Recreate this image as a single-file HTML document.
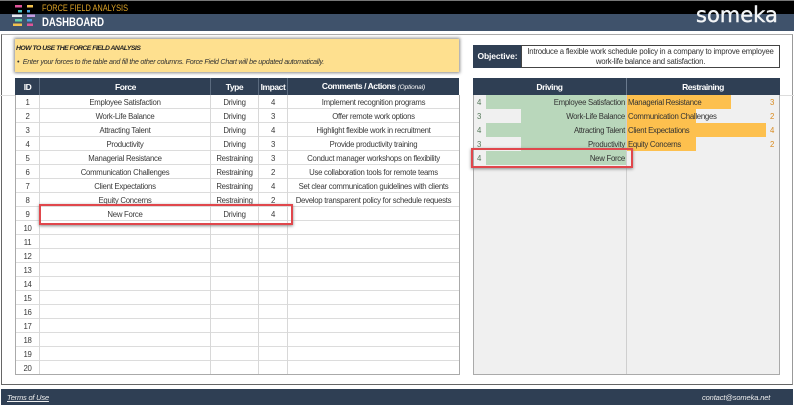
<!DOCTYPE html>
<html><head><meta charset="utf-8">
<style>
html,body{margin:0;padding:0;background:#fff}
#p{position:relative;width:794px;height:407px;overflow:hidden;background:#fff;font-family:"Liberation Sans",sans-serif;color:#333;filter:blur(.3px)}
#p div{position:absolute;box-sizing:border-box}
.t{font-size:7.8px;text-align:center;line-height:15px;height:14px;white-space:nowrap;color:#3a3a3a;letter-spacing:-.28px}
.h{font-size:8.5px;font-weight:bold;color:#fff;text-align:center;line-height:18px;height:17px;top:78px;letter-spacing:-.45px;white-space:nowrap}
.bar{height:14px}
.lbl{font-size:7.8px;line-height:15px;height:14px;white-space:nowrap;color:#333;letter-spacing:-.28px}
</style></head><body><div id="p">
<div style="left:0;top:0;width:794px;height:1px;background:#777"></div>
<div style="left:0;top:1px;width:794px;height:13px;background:#000"></div>
<div style="left:0;top:14px;width:794px;height:17px;background:#3f526b"></div>
<div style="left:42px;top:1px;font-size:9px;line-height:15px;color:#e0a526;white-space:nowrap;transform:scaleX(.82);transform-origin:left top">FORCE FIELD ANALYSIS</div>
<div style="left:42px;top:15px;font-size:11.5px;font-weight:bold;line-height:17px;color:#fff;white-space:nowrap;transform:scaleX(.83);transform-origin:left top">DASHBOARD</div>
<svg style="position:absolute;left:0;top:0" width="40" height="32">
<rect x="15" y="5" width="7" height="2.5" fill="#e0559a"/><rect x="27" y="5" width="6" height="2.5" fill="#f2c14e"/>
<rect x="18" y="10" width="4" height="2.5" fill="#4cc3c9"/><rect x="27" y="10" width="3" height="2.5" fill="#4aa3df"/>
<rect x="12" y="14.5" width="10" height="2.5" fill="#e8e8f0"/><rect x="27" y="14.5" width="8" height="2.5" fill="#c79be0"/>
<rect x="15" y="19" width="7" height="2.5" fill="#5fd0a8"/><rect x="27" y="19" width="5" height="2.5" fill="#4aa3df"/>
<rect x="13" y="23.5" width="9" height="2.5" fill="#f2c14e"/><rect x="27" y="23.5" width="6" height="2.5" fill="#e0559a"/>
</svg>
<div style="left:696px;top:2px;width:90px;font-size:21px;line-height:26px;color:#f2f4f6;white-space:nowrap;font-family:'DejaVu Sans',sans-serif;-webkit-text-stroke:.4px #f2f4f6">someka</div>

<div style="left:1px;top:34px;width:792px;height:351px;border:1px solid #666;border-top-color:#aaa;border-right-color:#999;background:#fff"></div>
<div style="left:0;top:95px;width:15px;height:1px;background:#ddd"></div>

<div style="left:15px;top:39px;width:444px;height:33px;background:#fee08f;box-shadow:0 0 3px 1px #8a8a8a"></div>
<div style="left:16px;top:43px;font-size:6.8px;font-weight:bold;font-style:italic;line-height:11px;color:#222;white-space:nowrap;letter-spacing:-.5px">HOW TO USE THE FORCE FIELD ANALYSIS</div>
<div style="left:17px;top:56px;font-size:7.2px;font-style:italic;line-height:11px;color:#333;white-space:nowrap;letter-spacing:-.26px">•&nbsp; Enter your forces to the table and fill the other columns. Force Field Chart will be updated automatically.</div>

<div style="left:473px;top:45px;width:49px;height:23px;background:#2f3f54;color:#fff;font-size:8.5px;font-weight:bold;text-align:center;line-height:23px;letter-spacing:-.1px">Objective:</div>
<div style="left:521px;top:45px;width:259px;height:23px;background:#fff;border:1px solid #444;padding-top:1px;font-size:7.8px;line-height:10px;text-align:center;color:#333;white-space:nowrap;letter-spacing:-.22px">Introduce a flexible work schedule policy in a company to improve employee<br>work-life balance and satisfaction.</div>

<!-- table -->
<div style="left:15px;top:78px;width:444px;height:17px;background:#2f3f54"></div>
<div class="h" style="left:15px;width:25px">ID</div>
<div class="h" style="left:40px;width:171px">Force</div>
<div class="h" style="left:211px;width:47px">Type</div>
<div class="h" style="left:258px;width:30px">Impact</div>
<div class="h" style="left:288px;width:171px;line-height:17px">Comments / Actions <span style="font-weight:normal;font-style:italic;font-size:6.5px;letter-spacing:-.1px">(Optional)</span></div>
<div style="left:15px;top:95px;width:445px;height:280px;border:1px solid #aaa;border-top:0;border-bottom:1px solid #aaa;background:repeating-linear-gradient(to bottom,#fff 0,#fff 13px,#dcdcdc 13px,#dcdcdc 14px)"></div>
<div style="left:39px;top:78px;width:1px;height:296px;background:linear-gradient(#5a6a7e 17px,#d8d8d8 17px)"></div>
<div style="left:210px;top:78px;width:1px;height:296px;background:linear-gradient(#5a6a7e 17px,#d8d8d8 17px)"></div>
<div style="left:258px;top:78px;width:1px;height:296px;background:linear-gradient(#5a6a7e 17px,#d8d8d8 17px)"></div>
<div style="left:287px;top:78px;width:1px;height:296px;background:linear-gradient(#5a6a7e 17px,#d8d8d8 17px)"></div>

<div class="t" style="left:15px;top:95px;width:25px">1</div><div class="t" style="left:40px;top:95px;width:170px">Employee Satisfaction</div><div class="t" style="left:211px;top:95px;width:47px">Driving</div><div class="t" style="left:258px;top:95px;width:30px">4</div><div class="t" style="left:288px;top:95px;width:171px">Implement recognition programs</div>
<div class="t" style="left:15px;top:109px;width:25px">2</div><div class="t" style="left:40px;top:109px;width:170px">Work-Life Balance</div><div class="t" style="left:211px;top:109px;width:47px">Driving</div><div class="t" style="left:258px;top:109px;width:30px">3</div><div class="t" style="left:288px;top:109px;width:171px">Offer remote work options</div>
<div class="t" style="left:15px;top:123px;width:25px">3</div><div class="t" style="left:40px;top:123px;width:170px">Attracting Talent</div><div class="t" style="left:211px;top:123px;width:47px">Driving</div><div class="t" style="left:258px;top:123px;width:30px">4</div><div class="t" style="left:288px;top:123px;width:171px">Highlight flexible work in recruitment</div>
<div class="t" style="left:15px;top:137px;width:25px">4</div><div class="t" style="left:40px;top:137px;width:170px">Productivity</div><div class="t" style="left:211px;top:137px;width:47px">Driving</div><div class="t" style="left:258px;top:137px;width:30px">3</div><div class="t" style="left:288px;top:137px;width:171px">Provide productivity training</div>
<div class="t" style="left:15px;top:151px;width:25px">5</div><div class="t" style="left:40px;top:151px;width:170px">Managerial Resistance</div><div class="t" style="left:211px;top:151px;width:47px">Restraining</div><div class="t" style="left:258px;top:151px;width:30px">3</div><div class="t" style="left:288px;top:151px;width:171px">Conduct manager workshops on flexibility</div>
<div class="t" style="left:15px;top:165px;width:25px">6</div><div class="t" style="left:40px;top:165px;width:170px">Communication Challenges</div><div class="t" style="left:211px;top:165px;width:47px">Restraining</div><div class="t" style="left:258px;top:165px;width:30px">2</div><div class="t" style="left:288px;top:165px;width:171px">Use collaboration tools for remote teams</div>
<div class="t" style="left:15px;top:179px;width:25px">7</div><div class="t" style="left:40px;top:179px;width:170px">Client Expectations</div><div class="t" style="left:211px;top:179px;width:47px">Restraining</div><div class="t" style="left:258px;top:179px;width:30px">4</div><div class="t" style="left:288px;top:179px;width:171px">Set clear communication guidelines with clients</div>
<div class="t" style="left:15px;top:193px;width:25px">8</div><div class="t" style="left:40px;top:193px;width:170px">Equity Concerns</div><div class="t" style="left:211px;top:193px;width:47px">Restraining</div><div class="t" style="left:258px;top:193px;width:30px">2</div><div class="t" style="left:288px;top:193px;width:171px">Develop transparent policy for schedule requests</div>
<div class="t" style="left:15px;top:207px;width:25px">9</div><div class="t" style="left:40px;top:207px;width:170px">New Force</div><div class="t" style="left:211px;top:207px;width:47px">Driving</div><div class="t" style="left:258px;top:207px;width:30px">4</div>
<div class="t" style="left:15px;top:221px;width:25px">10</div>
<div class="t" style="left:15px;top:235px;width:25px">11</div>
<div class="t" style="left:15px;top:249px;width:25px">12</div>
<div class="t" style="left:15px;top:263px;width:25px">13</div>
<div class="t" style="left:15px;top:277px;width:25px">14</div>
<div class="t" style="left:15px;top:291px;width:25px">15</div>
<div class="t" style="left:15px;top:305px;width:25px">16</div>
<div class="t" style="left:15px;top:319px;width:25px">17</div>
<div class="t" style="left:15px;top:333px;width:25px">18</div>
<div class="t" style="left:15px;top:347px;width:25px">19</div>
<div class="t" style="left:15px;top:361px;width:25px">20</div>

<!-- chart -->
<div style="left:473px;top:78px;width:307px;height:17px;background:#2f3f54"></div>
<div class="h" style="left:473px;width:153px">Driving</div>
<div class="h" style="left:626px;width:154px">Restraining</div>
<div style="left:626px;top:78px;width:1px;height:17px;background:#6a7a8e"></div>
<div style="left:473px;top:95px;width:307px;height:280px;background:#f0f0f0;border:1px solid #aaa;border-top:0"></div>
<div style="left:626px;top:95px;width:1px;height:279px;background:#cfcfcf"></div>
<div style="left:780px;top:95px;width:14px;height:1px;background:#ddd"></div>

<div class="bar" style="left:486px;top:95px;width:140px;background:#b9d7bb"></div>
<div class="bar" style="left:521px;top:109px;width:105px;background:#b9d7bb"></div>
<div class="bar" style="left:486px;top:123px;width:140px;background:#b9d7bb"></div>
<div class="bar" style="left:521px;top:137px;width:105px;background:#b9d7bb"></div>
<div class="bar" style="left:486px;top:151px;width:140px;background:#b9d7bb"></div>
<div class="bar" style="left:627px;top:95px;width:104px;background:#fdc04e"></div>
<div class="bar" style="left:627px;top:109px;width:69px;background:#fdc04e"></div>
<div class="bar" style="left:627px;top:123px;width:139px;background:#fdc04e"></div>
<div class="bar" style="left:627px;top:137px;width:69px;background:#fdc04e"></div>

<div class="lbl" style="left:449px;width:176px;text-align:right;top:95px">Employee Satisfaction</div>
<div class="lbl" style="left:449px;width:176px;text-align:right;top:109px">Work-Life Balance</div>
<div class="lbl" style="left:449px;width:176px;text-align:right;top:123px">Attracting Talent</div>
<div class="lbl" style="left:449px;width:176px;text-align:right;top:137px">Productivity</div>
<div class="lbl" style="left:449px;width:176px;text-align:right;top:151px">New Force</div>
<div class="lbl" style="left:628px;top:95px">Managerial Resistance</div>
<div class="lbl" style="left:628px;top:109px">Communication Challenges</div>
<div class="lbl" style="left:628px;top:123px">Client Expectations</div>
<div class="lbl" style="left:628px;top:137px">Equity Concerns</div>

<div class="lbl" style="left:475px;width:8px;text-align:center;top:95px;color:#55795a">4</div>
<div class="lbl" style="left:475px;width:8px;text-align:center;top:109px;color:#55795a">3</div>
<div class="lbl" style="left:475px;width:8px;text-align:center;top:123px;color:#55795a">4</div>
<div class="lbl" style="left:475px;width:8px;text-align:center;top:137px;color:#55795a">3</div>
<div class="lbl" style="left:475px;width:8px;text-align:center;top:151px;color:#55795a">4</div>
<div class="lbl" style="left:768px;width:8px;text-align:center;top:95px;color:#d98a1e">3</div>
<div class="lbl" style="left:768px;width:8px;text-align:center;top:109px;color:#d98a1e">2</div>
<div class="lbl" style="left:768px;width:8px;text-align:center;top:123px;color:#d98a1e">4</div>
<div class="lbl" style="left:768px;width:8px;text-align:center;top:137px;color:#d98a1e">2</div>

<!-- red highlights -->
<div style="left:39px;top:204px;width:254px;height:21px;border:2px solid #e0474c;box-shadow:0 1px 3px #888"></div>
<div style="left:471px;top:148px;width:162px;height:20px;border:2px solid #e0474c;box-shadow:0 1px 3px #888"></div>

<!-- footer -->
<div style="left:1px;top:389px;width:792px;height:16px;background:#2f3f54"></div>
<div style="left:7px;top:390px;font-size:7.5px;font-style:italic;line-height:16px;color:#eee;text-decoration:underline;white-space:nowrap;letter-spacing:-.2px">Terms of Use</div>
<div style="left:702px;top:390px;font-size:7.5px;font-style:italic;line-height:16px;color:#eee;white-space:nowrap;letter-spacing:-.13px">contact@someka.net</div>
</div></body></html>
